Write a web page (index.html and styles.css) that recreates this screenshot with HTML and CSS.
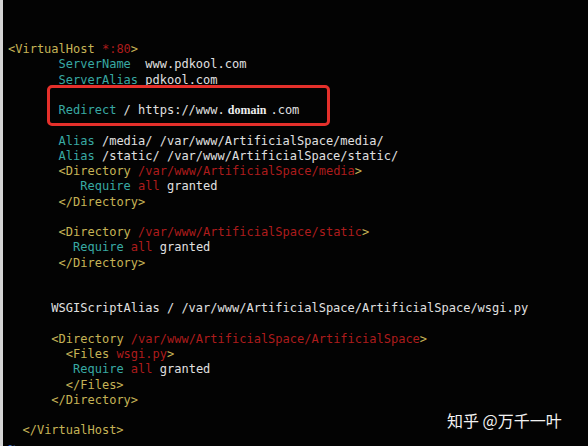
FILE: index.html
```html
<!DOCTYPE html>
<html>

<head>
    <meta charset="UTF-8">
    <title>VirtualHost</title>
    <link rel="stylesheet" href="styles.css">
</head>

<body>
    <div class="term">
<pre class="code"><span class="tag">&lt;VirtualHost</span> <span class="red">*:80</span><span class="tag">&gt;</span>
       <span class="kw">ServerName</span>  www.pdkool.com
       <span class="kw">ServerAlias</span> pdkool.com

       <span class="kw">Redirect</span> / https://www.<span class="dom">domain</span>.com

       <span class="kw">Alias</span> /media/ /var/www/ArtificialSpace/media/
       <span class="kw">Alias</span> /static/ /var/www/ArtificialSpace/static/
       <span class="tag">&lt;Directory</span> <span class="red">/var/www/ArtificialSpace/media</span><span class="tag">&gt;</span>
          <span class="kw">Require</span> <span class="red">all</span> granted
       <span class="tag">&lt;/Directory&gt;</span>

       <span class="tag">&lt;Directory</span> <span class="red">/var/www/ArtificialSpace/static</span><span class="tag">&gt;</span>
         <span class="kw">Require</span> <span class="red">all</span> granted
       <span class="tag">&lt;/Directory&gt;</span>


      WSGIScriptAlias / /var/www/ArtificialSpace/ArtificialSpace/wsgi.py

      <span class="tag">&lt;Directory</span> <span class="red">/var/www/ArtificialSpace/ArtificialSpace</span><span class="tag">&gt;</span>
        <span class="tag">&lt;Files</span> <span class="red">wsgi.py</span><span class="tag">&gt;</span>
         <span class="kw">Require</span> <span class="red">all</span> granted
        <span class="tag">&lt;/Files&gt;</span>
      <span class="tag">&lt;/Directory&gt;</span>

  <span class="tag">&lt;/VirtualHost&gt;</span>
<span class="tilde">~</span></pre>
        <div class="mark"></div>
        <div class="watermark">知乎 @万千一叶</div>
    </div>
</body>

</html>
```

FILE: styles.css
```css
html,
body {
    margin: 0;
    padding: 0;
    background-color: #000;
}

.term {
    position: relative;
    width: 585px;
    height: 446px;
    overflow: hidden;
    border-left: 3px solid #d4d4d4;
    background-color: #030303;
}

.code {
    margin: 0;
    padding: 42px 0 0 5px;
    font-family: "DejaVu Sans Mono", monospace;
    font-size: 12px;
    line-height: 15.25px;
    color: #e0e0e0;
    white-space: pre;
}

.tag {
    color: #c6b356;
}

.kw {
    color: #38a9a3;
}

.red {
    color: #ad1c1c;
}

.tilde {
    color: #3d6fd8;
}

.dom {
    font-family: "Liberation Serif", serif;
    font-weight: bold;
    font-size: 12px;
    padding: 0 4px 0 3px;
    color: #eeeeee;
}

.mark {
    position: absolute;
    left: 44px;
    top: 85px;
    width: 277px;
    height: 35px;
    border: 3px solid #e5302b;
    border-radius: 5px;
}

.watermark {
    position: absolute;
    left: 444px;
    top: 410px;
    font-family: "Noto Sans CJK SC", sans-serif;
    font-size: 16px;
    line-height: 20px;
    color: #f2f2f2;
}
```
